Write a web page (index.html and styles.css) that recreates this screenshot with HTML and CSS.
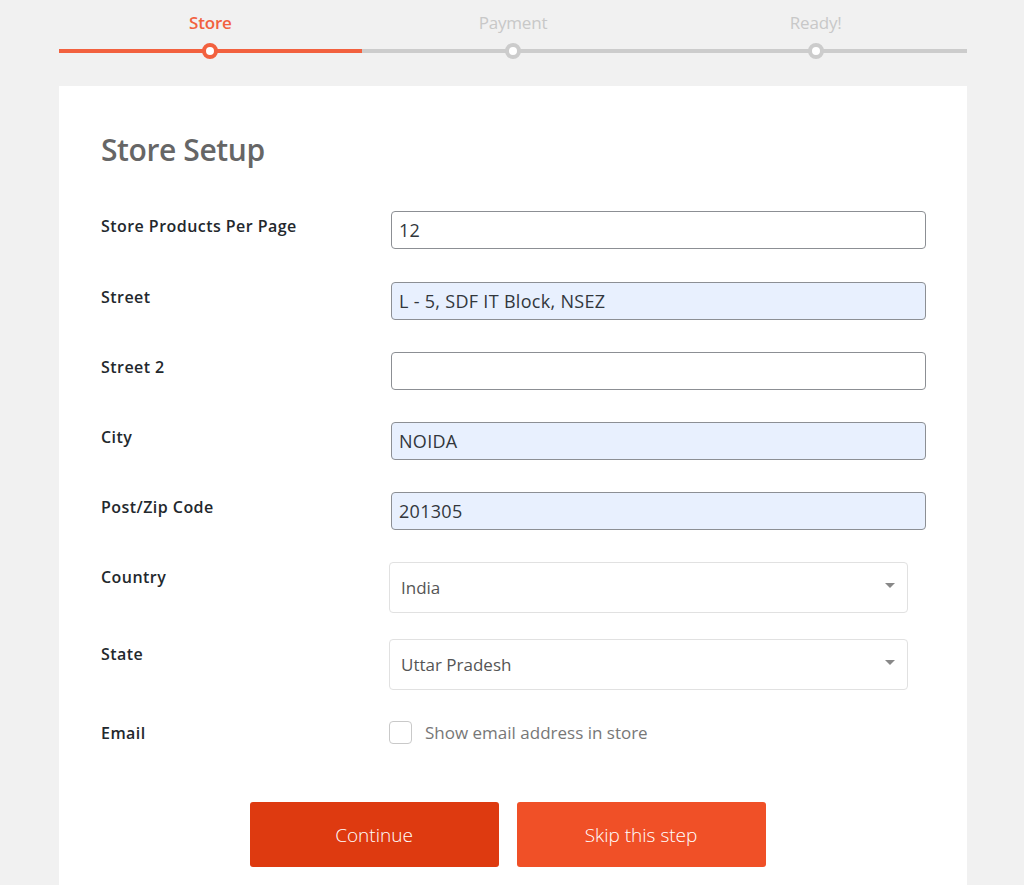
FILE: index.html
```html
<!DOCTYPE html>
<html lang="en">
<head>
<meta charset="utf-8">
<title>Store Setup</title>
<link rel="stylesheet" href="styles.css">
</head>
<body>
<div class="wizard">
  <ol class="steps">
    <li class="step done active"><span class="step-name">Store</span><span class="dot"></span></li>
    <li class="step"><span class="step-name">Payment</span><span class="dot"></span></li>
    <li class="step"><span class="step-name">Ready!</span><span class="dot"></span></li>
  </ol>

  <div class="card">
    <h1 class="title">Store Setup</h1>
    <form class="form">
      <div class="row">
        <label class="label" for="ppp">Store Products Per Page</label>
        <input class="field" id="ppp" type="text" value="12">
      </div>
      <div class="row">
        <label class="label" for="street">Street</label>
        <input class="field filled" id="street" type="text" value="L - 5, SDF IT Block, NSEZ">
      </div>
      <div class="row">
        <label class="label" for="street2">Street 2</label>
        <input class="field" id="street2" type="text" value="">
      </div>
      <div class="row">
        <label class="label" for="city">City</label>
        <input class="field filled" id="city" type="text" value="NOIDA">
      </div>
      <div class="row">
        <label class="label" for="zip">Post/Zip Code</label>
        <input class="field filled" id="zip" type="text" value="201305">
      </div>
      <div class="row row-select">
        <span class="label">Country</span>
        <div class="select"><span>India</span><span class="caret"></span></div>
      </div>
      <div class="row row-select">
        <span class="label">State</span>
        <div class="select"><span>Uttar Pradesh</span><span class="caret"></span></div>
      </div>
      <div class="row row-check">
        <span class="label">Email</span>
        <label class="check"><span class="box"></span><span class="check-text">Show email address in store</span></label>
      </div>
      <div class="actions">
        <button type="button" class="btn btn-primary">Continue</button>
        <button type="button" class="btn btn-secondary">Skip this step</button>
      </div>
    </form>
  </div>
</div>
</body>
</html>
```

FILE: styles.css
```css
* { box-sizing: border-box; }

html, body {
  margin: 0;
  padding: 0;
  background: #f1f1f1;
  font-family: "Open Sans", "Noto Sans", sans-serif;
  color: #333;
}

.wizard {
  width: 908px;
  margin: 0 0 0 59px;
}

/* progress steps */
.steps {
  list-style: none;
  margin: 0;
  padding: 0;
  display: flex;
}

.step {
  flex: 1;
  display: flex;
  flex-direction: column;
  align-items: center;
  position: relative;
  height: 86px;
}

.step::after {
  content: "";
  position: absolute;
  left: 0;
  right: 0;
  top: 49px;
  height: 4px;
  background: #cccccc;
}

.step.done::after { background: #f2613f; }

.step-name {
  margin-top: 11px;
  font-size: 17px;
  line-height: 24px;
  color: #c8c8c8;
  letter-spacing: -0.2px;
}

.step.active .step-name {
  color: #f2613f;
  font-weight: 600;
}

.dot {
  position: absolute;
  top: 43px;
  left: 50%;
  margin-left: -8px;
  width: 16px;
  height: 16px;
  border-radius: 50%;
  background: #fff;
  border: 4px solid #cccccc;
  z-index: 1;
}

.step.active .dot { border-color: #f2613f; }

/* card */
.card {
  background: #fff;
  padding: 44px 41px 40px 42px;
  min-height: 820px;
}

.title {
  margin: 0 0 41px;
  font-size: 30px;
  line-height: 40px;
  font-weight: 600;
  color: #666;
  letter-spacing: -0.4px;
}

.form {
  display: flex;
  flex-direction: column;
}

.row {
  display: flex;
  align-items: flex-start;
  margin-bottom: 32px;
}

.row:first-child + .row { margin-top: 1px; }

.label {
  width: 290px;
  flex: none;
  font-size: 16px;
  font-weight: 600;
  line-height: 20px;
  padding-top: 5px;
  color: #23282d;
  letter-spacing: 0.45px;
}

.field {
  flex: 1;
  height: 38px;
  border: 1px solid #8c8f94;
  border-radius: 4px;
  padding: 0 7px;
  font-family: inherit;
  font-size: 18px;
  color: #32373c;
  background: #fff;
  outline: none;
  letter-spacing: 0.3px;
}

.field.filled { background: #e8f0fe; }

.row-select { margin-bottom: 26px; }
.row-select + .row-check { margin-top: 5px; }

.select {
  margin-left: -2px;
  width: 519px;
  height: 51px;
  border: 1px solid #e1e1e1;
  border-radius: 4px;
  display: flex;
  align-items: center;
  justify-content: space-between;
  padding: 0 12px 0 11px;
  font-size: 17px;
  color: #555;
}

.caret {
  width: 0;
  height: 0;
  border-left: 5px solid transparent;
  border-right: 5px solid transparent;
  border-top: 5px solid #888;
  margin-top: -4px;
}

.row-check { margin-bottom: 58px; align-items: center; }
.row-check .label { padding-top: 0; }

.check {
  margin-left: -2px;
  display: flex;
  align-items: center;
  gap: 13px;
}

.box {
  width: 23px;
  height: 23px;
  border: 1px solid #c9c9c9;
  border-radius: 4px;
  background: #fff;
}

.check-text {
  font-size: 17px;
  color: #777;
}

.actions {
  display: flex;
  justify-content: center;
  gap: 18px;
  padding-right: 12px;
}

.btn {
  width: 249px;
  height: 65px;
  border: 0;
  border-radius: 3px;
  color: #fff;
  font-family: inherit;
  font-size: 19px;
  font-weight: 300;
  cursor: pointer;
}

.btn-primary { background: #de3a10; }
.btn-secondary { background: #f05027; }
```
